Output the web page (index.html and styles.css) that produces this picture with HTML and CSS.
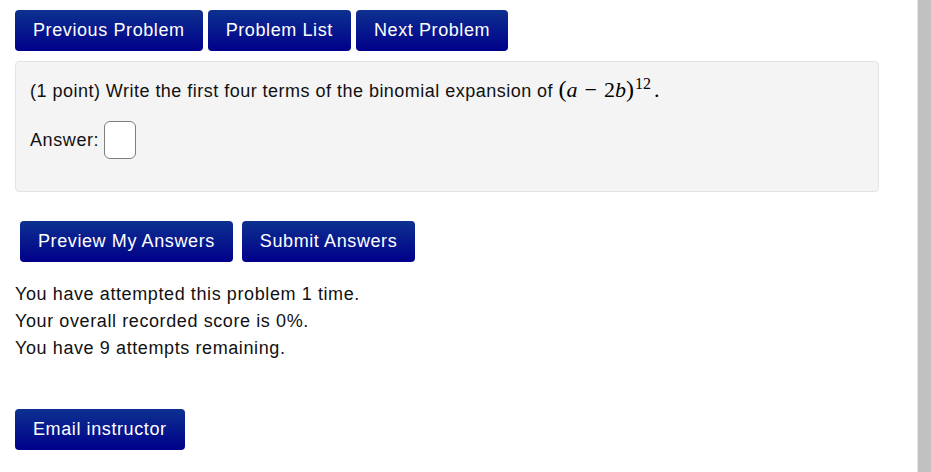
FILE: index.html
```html
<!DOCTYPE html>
<html>
<head>
<meta charset="utf-8">
<link rel="stylesheet" href="styles.css">
</head>
<body>
<div class="page">
  <main class="main">
    <nav class="nav">
      <a class="btn">Previous Problem</a>
      <a class="btn">Problem List</a>
      <a class="btn">Next Problem</a>
    </nav>
    <section class="well">
      <p class="question">(1 point) Write the first four terms of the binomial expansion of <span class="math"><span class="paren">(</span><i>a</i><span class="op">−</span>2<i>b</i><span class="paren">)</span><sup>12</sup><span class="dot">.</span></span></p>
      <p class="answer">Answer: <span class="input"></span></p>
    </section>
    <div class="submit-row">
      <a class="btn">Preview My Answers</a>
      <a class="btn">Submit Answers</a>
    </div>
    <div class="status">
      <div>You have attempted this problem 1 time.</div>
      <div>Your overall recorded score is 0%.</div>
      <div>You have 9 attempts remaining.</div>
    </div>
    <div class="email-row">
      <a class="btn">Email instructor</a>
    </div>
  </main>
  <aside class="scrollbar"></aside>
</div>
</body>
</html>
```

FILE: styles.css
```css
html, body {
  margin: 0;
  padding: 0;
  background: #fff;
}
body {
  font-family: "Liberation Sans", Arial, sans-serif;
  font-size: 18px;
  letter-spacing: 0.6px;
  color: #111;
}
.page {
  display: flex;
  height: 472px;
  overflow: hidden;
}
.main {
  flex: 1;
  padding: 10px 38px 0 15px;
}
.scrollbar {
  width: 13px;
  background: #c1c1c1;
  border-left: 1px solid #e6e6e6;
}
.btn {
  display: inline-block;
  box-sizing: border-box;
  height: 41px;
  line-height: 41px;
  padding: 0 18px;
  color: #fff;
  text-decoration: none;
  background: linear-gradient(#0d3190, #00008a);
  border-radius: 4px;
  font-size: 18px;
}
.nav {
  display: flex;
  gap: 5px;
}
.well {
  margin-top: 10px;
  height: 131px;
  box-sizing: border-box;
  background: #f4f4f4;
  border: 1px solid #e3e3e3;
  border-radius: 4px;
  padding: 14px 14px;
}
.question {
  margin: 0;
  line-height: 27px;
  height: 27px;
  color: #111;
  letter-spacing: 0.48px;
}
.math {
  font-family: "Liberation Serif", "DejaVu Serif", serif;
  font-size: 22px;
  letter-spacing: 0;
  color: #000;
}
.math i {
  font-style: italic;
}
.math .paren {
  font-size: 24px;
}
.math .op {
  margin: 0 7px;
}
.math sup {
  font-size: 16px;
  vertical-align: 8px;
  line-height: 0;
  margin-left: 1px;
}
.math .dot {
  margin-left: 3px;
}
.answer {
  margin: 18px 0 0;
  display: flex;
  align-items: center;
  gap: 5px;
}
.input {
  display: inline-block;
  width: 32px;
  height: 38px;
  box-sizing: border-box;
  background: #fff;
  border: 1px solid #7d7d7d;
  border-radius: 6px;
}
.submit-row {
  margin-top: 29px;
  padding-left: 5px;
  display: flex;
  gap: 9px;
}
.status {
  margin-top: 19px;
  line-height: 27px;
}
.email-row {
  margin-top: 47px;
  display: flex;
}
```
